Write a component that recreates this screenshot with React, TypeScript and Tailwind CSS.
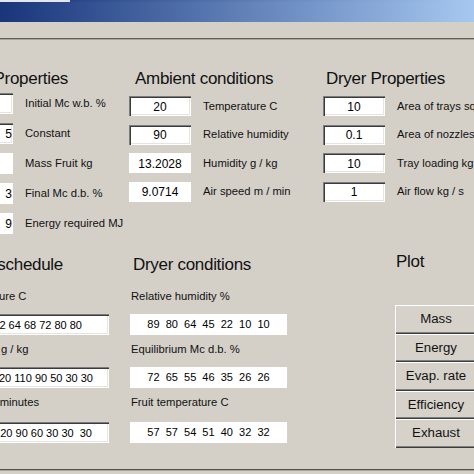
import React from "react";

const editShadow =
  "shadow-[inset_1px_1px_0_#7c7c7c,inset_2px_2px_0_#3a3a3a,inset_-1px_-1px_0_#ffffff,inset_-2px_-2px_0_#e6e4de]";

function Box({
  value,
  edit,
  className = "",
  textClass = "text-[12px]",
}: {
  value: string;
  edit?: boolean;
  className?: string;
  textClass?: string;
}) {
  return (
    <div
      className={`shrink-0 bg-white flex items-center overflow-hidden text-black ${
        edit ? editShadow : ""
      } ${className}`}
    >
      <span className={`whitespace-pre shrink-0 ${textClass}`}>{value}</span>
    </div>
  );
}

function TopRow({
  value,
  label,
  edit,
  h,
  right,
}: {
  value: string;
  label: string;
  edit?: boolean;
  h: string;
  right?: boolean;
}) {
  return (
    <div className={`flex items-center ${h}`}>
      <Box
        value={value}
        edit={edit}
        className={`w-[62px] h-full ${right ? "justify-end pr-[1px]" : "justify-center pt-[1px]"}`}
      />
      <span className="ml-[12px] text-[11.25px] whitespace-nowrap text-[#111]">{label}</span>
    </div>
  );
}

function PlotButton({ label }: { label: string }) {
  return (
    <div className="h-[28.5px] w-[82px] flex items-center justify-center bg-[#d6d2ca] text-[13.25px] text-[#111] shadow-[inset_1px_1px_0_#ffffff,inset_-1px_-1px_0_#3c3c3c,inset_-2px_-2px_0_#808080]">
      {label}
    </div>
  );
}

export default function App() {
  const heading = "h-[20px] leading-[20px] text-[17px] tracking-[-0.3px] whitespace-nowrap text-[#111]";
  const bLabel = "h-[16px] leading-[16px] text-[11.25px] whitespace-nowrap text-[#111]";
  return (
    <div className="w-[474px] h-[474px] overflow-hidden bg-[#d4d0c8] flex flex-col font-['Liberation_Sans',Arial,sans-serif]">
      {/* title bar */}
      <div className="flex h-[2px] shrink-0">
        <div className="w-[70px] bg-[#e4e6ee]" />
        <div className="flex-1 bg-gradient-to-r from-[#2a4488] to-[#a6c8f0]" />
      </div>
      <div className="h-[20px] shrink-0 bg-gradient-to-r from-[#1a357a] via-[#5f7fb6] to-[#a6c8f0]" />
      <div className="h-[16px] shrink-0" />
      <div className="h-[1px] shrink-0 bg-[#5f5b55]" />
      <div className="h-[1px] shrink-0 bg-[#a8a49c]" />

      {/* top section */}
      <div className="flex items-start mt-[29px] shrink-0">
        <div className="ml-[-49px] w-[178px] shrink-0 flex flex-col">
          <div className={`${heading} w-[117px] text-right`}>Fruit Properties</div>
          <div className="mt-[4px] flex flex-col gap-[9px]">
            <TopRow h="h-[21px]" value="" edit right label="Initial Mc w.b. %" />
            <TopRow h="h-[21px]" value="5" edit right label="Constant" />
            <TopRow h="h-[21px]" value="" right label="Mass Fruit kg" />
            <TopRow h="h-[21px]" value="3" right label="Final Mc d.b. %" />
            <TopRow h="h-[21px]" value="9" right label="Energy required MJ" />
          </div>
        </div>
        <div className="w-[194px] shrink-0 flex flex-col">
          <div className={`${heading} pl-[6px]`}>Ambient conditions</div>
          <div className="mt-[7px] flex flex-col gap-[8.5px]">
            <TopRow h="h-[20px]" value="20" edit label="Temperature C" />
            <TopRow h="h-[20px]" value="90" edit label="Relative humidity" />
            <TopRow h="h-[20px]" value="13.2028" label="Humidity g / kg" />
            <TopRow h="h-[20px]" value="9.0714" label="Air speed m / min" />
          </div>
        </div>
        <div className="shrink-0 flex flex-col">
          <div className={`${heading} pl-[3px]`}>Dryer Properties</div>
          <div className="mt-[7px] flex flex-col gap-[8.5px]">
            <TopRow h="h-[20px]" value="10" edit label="Area of trays sq m" />
            <TopRow h="h-[20px]" value="0.1" edit label="Area of nozzles sq m" />
            <TopRow h="h-[20px]" value="10" edit label="Tray loading kg / sq m" />
            <TopRow h="h-[20px]" value="1" edit label="Air flow kg / s" />
          </div>
        </div>
      </div>

      {/* bottom section */}
      <div className="flex items-start mt-[21px] shrink-0">
        <div className="ml-[-60px] w-[190px] shrink-0 flex flex-col">
          <div className={`${heading} w-[123px] text-right`}>Drying schedule</div>
          <div className={`${bLabel} mt-[13px] pl-[12px]`}>Temperature C</div>
          <Box value="62 64 68 72 80 80" edit textClass="text-[11px]" className="mt-[10px] w-[169px] h-[21px] justify-end pr-[27px] pt-[2px]" />
          <div className={`${bLabel} mt-[5.5px] pl-[14px]`}>Humidity g / kg</div>
          <Box value="120 110 90 50 30 30" edit textClass="text-[11px]" className="mt-[10.5px] w-[169px] h-[21px] justify-end pr-[16px] pt-[2px]" />
          <div className={`${bLabel} mt-[6px] pl-[14px]`}>Duration minutes</div>
          <Box value="120 90 60 30 30  30" edit textClass="text-[11px]" className="mt-[12px] w-[169px] h-[21px] justify-end pr-[17px] pt-[2px]" />
        </div>
        <div className="w-[265px] shrink-0 flex flex-col">
          <div className={`${heading} pl-[3px]`}>Dryer conditions</div>
          <div className={`${bLabel} mt-[13px] pl-[1px]`}>Relative humidity %</div>
          <Box value="89  80  64  45  22  10  10" textClass="text-[11px]" className="mt-[10px] w-[157px] h-[21px] justify-center" />
          <div className={`${bLabel} mt-[5.5px] pl-[1px]`}>Equilibrium Mc d.b. %</div>
          <Box value="72  65  55  46  35  26  26" textClass="text-[11px]" className="mt-[10.5px] w-[157px] h-[21px] justify-center" />
          <div className={`${bLabel} mt-[6px] pl-[1px]`}>Fruit temperature C</div>
          <Box value="57  57  54  51  40  32  32" textClass="text-[11px]" className="mt-[12px] w-[157px] h-[21px] justify-center" />
        </div>
        <div className="w-[82px] shrink-0 flex flex-col">
          <div className={`${heading} mt-[-3px] pl-[1px]`}>Plot</div>
          <div className="mt-[33px] flex flex-col">
            <PlotButton label="Mass" />
            <PlotButton label="Energy" />
            <PlotButton label="Evap. rate" />
            <PlotButton label="Efficiency" />
            <PlotButton label="Exhaust" />
          </div>
        </div>
      </div>

      <div className="mt-auto h-[1px] shrink-0 bg-[#55514b]" />
      <div className="h-[1px] shrink-0 bg-[#a8a49c]" />
      <div className="h-[3px] shrink-0" />
    </div>
  );
}
